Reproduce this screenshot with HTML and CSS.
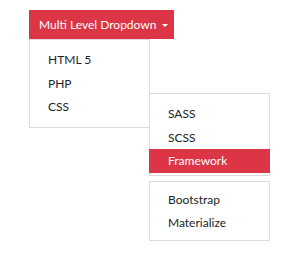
FILE: index.html
```html
<!DOCTYPE html>
<html lang="en">
<head>
  <meta charset="UTF-8">
  <meta name="viewport" content="width=device-width, initial-scale=1.0">
  <title>Multi Level Dropdown</title>
  <link rel="stylesheet" href="styles.css">
</head>
<body>

  <div class="dropdown">
    <button class="dropdown-toggle">Multi Level Dropdown</button>

    <div class="levels">
      <ul class="menu menu-main">
        <li><a href="#">HTML 5</a></li>
        <li><a href="#">PHP</a></li>
        <li><a href="#">CSS</a></li>
      </ul>

      <div class="sub-col">
        <ul class="menu menu-sub">
          <li><a href="#">SASS</a></li>
          <li><a href="#">SCSS</a></li>
          <li class="active"><a href="#">Framework</a></li>
        </ul>
        <ul class="menu menu-sub2">
          <li><a href="#">Bootstrap</a></li>
          <li><a href="#">Materialize</a></li>
        </ul>
      </div>
    </div>
  </div>

</body>
</html>
```

FILE: styles.css
```css
body {
  font-family: Lato, "Open Sans", sans-serif;
  font-size: 12px;
  color: #212529;
  background: #fff;
  margin: 0;
  padding: 10px 0 0 29px;
}
.dropdown {
  display: inline-flex;
  flex-direction: column;
  align-items: flex-start;
}
.dropdown-toggle {
  font-family: inherit;
  font-size: 12px;
  color: #fff;
  background-color: #dc3545;
  border: none;
  border-radius: 0;
  height: 29px;
  padding: 0 6px 0 10px;
  cursor: pointer;
}
.dropdown-toggle::after {
  content: "";
  display: inline-block;
  margin-left: 6px;
  vertical-align: 2px;
  border-top: 3px solid #fff;
  border-left: 3px solid transparent;
  border-right: 3px solid transparent;
}
.levels {
  display: flex;
  align-items: flex-start;
}
.menu {
  list-style: none;
  margin: 0;
  padding: 8px 0;
  width: 119px;
  background: #fff;
  border: 1px solid #dcdcdc;
}
.menu a {
  display: block;
  padding: 0 18px;
  line-height: 23.5px;
  color: #212529;
  text-decoration: none;
}
.sub-col {
  display: flex;
  flex-direction: column;
  margin-top: 54px;
  margin-left: -1px;
}
.menu-sub {
  padding: 8px 0 2px;
}
.menu-sub2 {
  margin-top: 5px;
  padding: 6px 0 5px;
}
.menu .active > a {
  background: #dc3545;
  color: #fff;
  margin: 0 -1px;
  padding-left: 19px;
}
```
